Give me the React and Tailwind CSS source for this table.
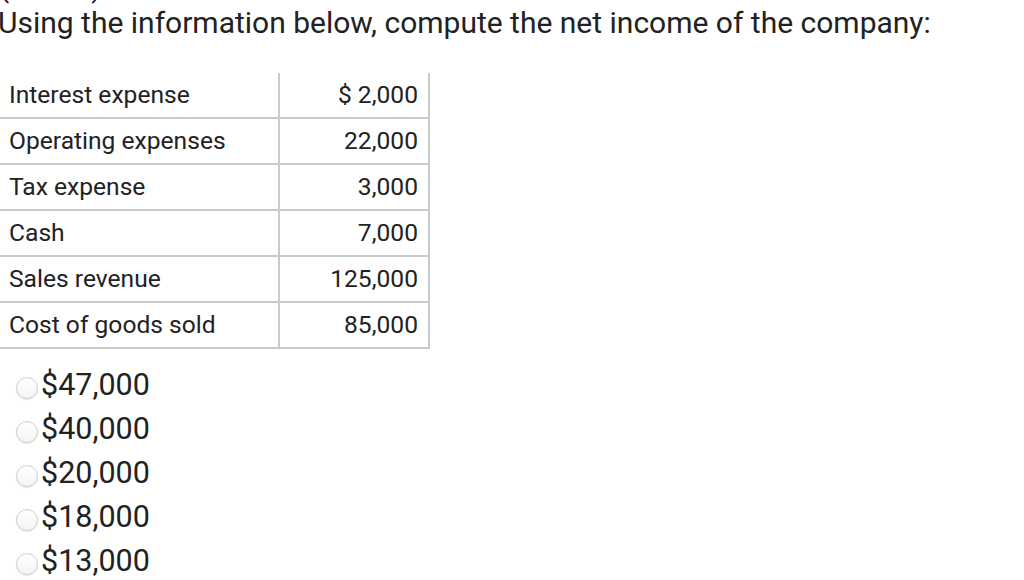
import React from 'react'

const rows = [
  ['Interest expense', '$ 2,000'],
  ['Operating expenses', '22,000'],
  ['Tax expense', '3,000'],
  ['Cash', '7,000'],
  ['Sales revenue', '125,000'],
  ['Cost of goods sold', '85,000'],
]

const options = ['$47,000', '$40,000', '$20,000', '$18,000', '$13,000']

export default function App() {
  return (
    <div className="w-[1024px] h-[580px] overflow-hidden bg-white text-[#222] font-['Roboto',sans-serif]">
      {/* line above, only its bottom shows */}
      <div className="mt-[-31px] h-[36px] text-[30px] leading-[36px] -ml-[1px]">(TCO 2)</div>
      <h1 className="text-[30px] leading-[36px] -ml-[2px]">
        Using the information below, compute the net income of the company:
      </h1>

      <div className="mt-[32px] w-[430px]">
        {rows.map(([label, value]) => (
          <div key={label} className="flex h-[46px] border-b-2 border-[#c6ccc7]">
            <div className="w-[280px] border-r-2 border-[#c6ccc7] pl-[9px] text-[24.6px] leading-[44px]">{label}</div>
            <div className="w-[150px] border-r-2 border-[#c6ccc7] pr-[10px] text-right text-[24.6px] leading-[44px]">{value}</div>
          </div>
        ))}
      </div>

      <div className="mt-[14px] flex flex-col">
        {options.map(o => (
          <label key={o} className="flex items-center h-[44px] pl-[16px]">
            <span className="mt-[6px] w-[22px] h-[22px] rounded-full border border-[#cfcfcf] bg-gradient-to-b from-white to-[#f4f4f4] shadow-[0_1px_1px_rgba(0,0,0,0.1)]"></span>
            <span className="ml-[3px] text-[30.5px] leading-[44px]">{o}</span>
          </label>
        ))}
      </div>
    </div>
  )
}
